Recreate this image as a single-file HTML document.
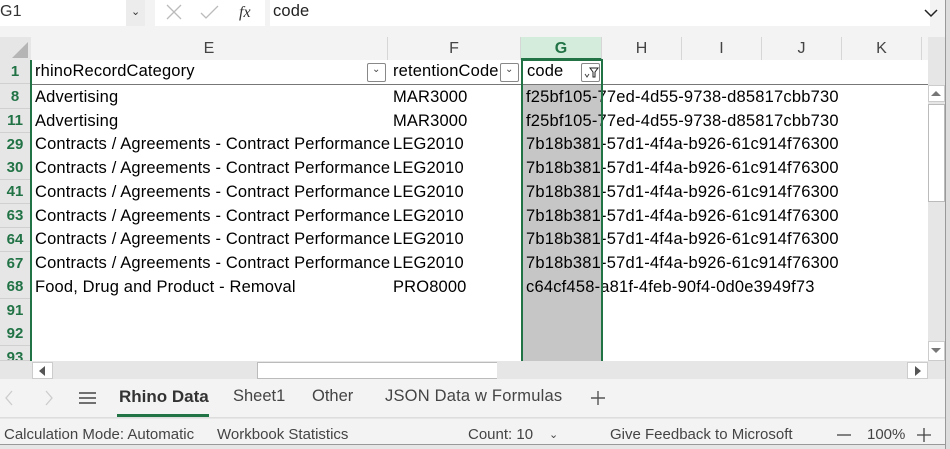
<!DOCTYPE html>
<html><head><style>
*{margin:0;padding:0;box-sizing:border-box}
body{width:950px;height:449px;overflow:hidden;background:#e6e6e6;font-family:"Liberation Sans",sans-serif;position:relative}
.a{position:absolute}
.t{font-size:16.5px;letter-spacing:0.15px;color:#000;white-space:nowrap}
.rh{position:absolute;left:0;width:30px;text-align:center;color:#217346;font-weight:bold;font-size:15px;background:#e6e6e6;border-bottom:1px solid #d0d0d0;height:24px;line-height:24px}
.ch{position:absolute;top:37px;height:23px;line-height:23px;text-align:center;color:#444;font-size:16px;border-right:1px solid #d6d6d6}
.dd{position:absolute;width:19px;height:19px;border:1px solid #888;border-radius:2px;background:#fff;top:63px}
</style></head><body>
<div class="a" style="left:0;top:0;width:945px;height:37px;background:#f3f3f3"></div>
<div class="a" style="left:0;top:0;width:145px;height:26px;background:#fff"></div>
<div class="a" style="left:126px;top:0;width:19px;height:26px;background:#ececec"></div>
<div class="a t" style="left:0;top:3px;font-size:16px;color:#333">G1</div>
<div class="a" style="left:131px;top:5px;font-size:11px;color:#333">&#8964;</div>
<div class="a" style="left:155px;top:0;width:110px;height:26px;background:#fff"></div>
<svg class="a" style="left:165px;top:3px" width="100" height="20"><path d="M2 2L16 16M16 2L2 16" stroke="#bbb" stroke-width="1.3"/><path d="M36 10L41 15L53 3" stroke="#bbb" stroke-width="1.3" fill="none"/><text x="74" y="14" font-family="Liberation Serif" font-style="italic" font-size="16" fill="#333">fx</text></svg>
<div class="a" style="left:270px;top:0;width:660px;height:26px;background:#fff"></div>
<div class="a t" style="left:273px;top:2px;color:#222">code</div>
<svg class="a" style="left:924px;top:8px" width="14" height="10"><path d="M1 2L7 8L13 2" stroke="#222" stroke-width="1.5" fill="none"/></svg>
<div class="a" style="left:945px;top:0;width:5px;height:449px;background:#ddd;border-left:1px solid #999"></div>
<div class="a" style="left:0;top:37px;width:31px;height:23px;background:#e6e6e6"></div>
<svg class="a" style="left:8px;top:40px" width="22" height="20"><path d="M20 2L20 18L4 18Z" fill="#b5b5b5"/></svg>
<div class="a" style="left:31px;top:37px;width:897px;height:23px;background:#f3f3f3"></div>
<div class="ch" style="left:31px;width:357px">E</div>
<div class="ch" style="left:388px;width:133px">F</div>
<div class="ch" style="left:521px;width:81px;background:#d3ecdc;color:#217346;font-weight:bold;border-bottom:2px solid #217346">G</div>
<div class="ch" style="left:602px;width:80px">H</div>
<div class="ch" style="left:682px;width:80px">I</div>
<div class="ch" style="left:762px;width:80px">J</div>
<div class="ch" style="left:842px;width:80px">K</div>
<div class="a" style="left:31px;top:60px;width:897px;height:301px;background:#fff"></div>
<div class="a" style="left:31px;top:84px;width:897px;height:1px;background:#777"></div>
<div class="a" style="left:30px;top:60px;width:2px;height:301px;background:#217346"></div>
<div class="a" style="left:523px;top:85px;width:78px;height:276px;background:#c6c6c6"></div>
<div class="a" style="left:521px;top:60px;width:2px;height:301px;background:#217346"></div>
<div class="a" style="left:601px;top:60px;width:2px;height:301px;background:#217346"></div>
<div class="a" style="left:521px;top:59px;width:82px;height:2px;background:#217346"></div>
<div class="a t" style="left:35px;top:62px">rhinoRecordCategory</div>
<div class="a t" style="left:393px;top:62px">retentionCode</div>
<div class="a t" style="left:527px;top:62px">code</div>
<div class="dd" style="left:367px"></div><div class="a" style="left:372px;top:64px;font-size:10px;color:#444">&#8964;</div>
<div class="dd" style="left:500px"></div><div class="a" style="left:505px;top:64px;font-size:10px;color:#444">&#8964;</div>
<div class="dd" style="left:581px"></div><svg class="a" style="left:583px;top:65px" width="16" height="16"><path d="M2 9L4 12L6 9" stroke="#444" fill="none"/><path d="M7 3H15L12 7V12L10 12V7Z" stroke="#222" fill="none"/></svg>
<div class="rh" style="top:60px">1</div>
<div class="rh" style="top:85px">8</div>
<div class="rh" style="top:109px">11</div>
<div class="rh" style="top:133px">29</div>
<div class="rh" style="top:156px">30</div>
<div class="rh" style="top:180px">41</div>
<div class="rh" style="top:204px">63</div>
<div class="rh" style="top:228px">64</div>
<div class="rh" style="top:252px">67</div>
<div class="rh" style="top:275px">68</div>
<div class="rh" style="top:299px">91</div>
<div class="rh" style="top:322px">92</div>
<div class="rh" style="top:346px;height:15px;overflow:hidden">93</div>
<div class="a t" style="left:35px;top:86px;line-height:23.7px">Advertising<br>Advertising<br>Contracts / Agreements - Contract Performance<br>Contracts / Agreements - Contract Performance<br>Contracts / Agreements - Contract Performance<br>Contracts / Agreements - Contract Performance<br>Contracts / Agreements - Contract Performance<br>Contracts / Agreements - Contract Performance<br>Food, Drug and Product - Removal</div>
<div class="a t" style="left:393px;top:86px;line-height:23.7px">MAR3000<br>MAR3000<br>LEG2010<br>LEG2010<br>LEG2010<br>LEG2010<br>LEG2010<br>LEG2010<br>PRO8000</div>
<div class="a t" style="left:526px;top:86px;line-height:23.7px;letter-spacing:0.2px">f25bf105-77ed-4d55-9738-d85817cbb730<br>f25bf105-77ed-4d55-9738-d85817cbb730<br>7b18b381-57d1-4f4a-b926-61c914f76300<br>7b18b381-57d1-4f4a-b926-61c914f76300<br>7b18b381-57d1-4f4a-b926-61c914f76300<br>7b18b381-57d1-4f4a-b926-61c914f76300<br>7b18b381-57d1-4f4a-b926-61c914f76300<br>7b18b381-57d1-4f4a-b926-61c914f76300<br>c64cf458-a81f-4feb-90f4-0d0e3949f73</div>
<div class="a" style="left:601px;top:85px;width:2px;height:276px;background:#217346"></div>
<div class="a" style="left:928px;top:37px;width:17px;height:324px;background:#e6e6e6"></div>
<div class="a" style="left:928px;top:85px;width:17px;height:17px;background:#fff;border:1px solid #ccc"></div>
<svg class="a" style="left:931px;top:91px" width="10" height="6"><path d="M0 5L5 0L10 5Z" fill="#777"/></svg>
<div class="a" style="left:928px;top:104px;width:17px;height:98px;background:#fff;border:1px solid #bbb"></div>
<div class="a" style="left:928px;top:341px;width:17px;height:20px;background:#fff;border:1px solid #ccc"></div>
<svg class="a" style="left:931px;top:348px" width="10" height="6"><path d="M0 0L5 5L10 0Z" fill="#777"/></svg>
<div class="a" style="left:0;top:361px;width:945px;height:18px;background:#e6e6e6"></div>
<div class="a" style="left:32px;top:362px;width:21px;height:17px;background:#fff;border:1px solid #ccc"></div>
<svg class="a" style="left:39px;top:366px" width="6" height="10"><path d="M6 0L0 5L6 10Z" fill="#555"/></svg>
<div class="a" style="left:257px;top:362px;width:240px;height:17px;background:#fff;border:1px solid #bbb;border-right:none"></div>
<div class="a" style="left:907px;top:362px;width:21px;height:17px;background:#fff;border:1px solid #ccc"></div>
<svg class="a" style="left:915px;top:366px" width="6" height="10"><path d="M0 0L6 5L0 10Z" fill="#555"/></svg>
<div class="a" style="left:0;top:379px;width:945px;height:39px;background:#f3f3f3;border-bottom:1px solid #ddd"></div>
<svg class="a" style="left:3px;top:390px" width="100" height="16"><path d="M9 1L3 8L9 15" stroke="#ccc" fill="none" stroke-width="1.3"/><path d="M43 1L49 8L43 15" stroke="#ccc" fill="none" stroke-width="1.3"/><path d="M76 3H93M76 8H93M76 13H93" stroke="#444" stroke-width="1.5"/></svg>
<div class="a" style="left:119px;top:387px;font-size:17px;font-weight:bold;color:#333">Rhino Data</div>
<div class="a" style="left:117px;top:414px;width:92px;height:3px;background:#217346"></div>
<div class="a" style="left:233px;top:387px;font-size:16.5px;color:#444">Sheet1</div>
<div class="a" style="left:312px;top:387px;font-size:16.5px;color:#444">Other</div>
<div class="a" style="left:385px;top:387px;font-size:16.5px;color:#444;letter-spacing:0.2px">JSON Data w Formulas</div>
<svg class="a" style="left:590px;top:390px" width="16" height="16"><path d="M8 1V15M1 8H15" stroke="#555" stroke-width="1.4"/></svg>
<div class="a" style="left:0;top:419px;width:945px;height:26px;background:#f3f3f3;border-bottom:1px solid #999"></div>
<div class="a" style="left:4px;top:426px;font-size:15px;color:#444">Calculation Mode: Automatic</div>
<div class="a" style="left:217px;top:426px;font-size:15px;color:#444">Workbook Statistics</div>
<div class="a" style="left:468px;top:426px;font-size:15px;color:#444">Count: 10</div>
<div class="a" style="left:549px;top:428px;font-size:11px;color:#444">&#8964;</div>
<div class="a" style="left:610px;top:426px;font-size:15px;color:#444">Give Feedback to Microsoft</div>
<svg class="a" style="left:836px;top:427px" width="16" height="16"><path d="M1 8H15" stroke="#444" stroke-width="1.3"/></svg>
<div class="a" style="left:867px;top:426px;font-size:15px;color:#444">100%</div>
<svg class="a" style="left:916px;top:427px" width="16" height="16"><path d="M8 1V15M1 8H15" stroke="#444" stroke-width="1.3"/></svg>
</body></html>
